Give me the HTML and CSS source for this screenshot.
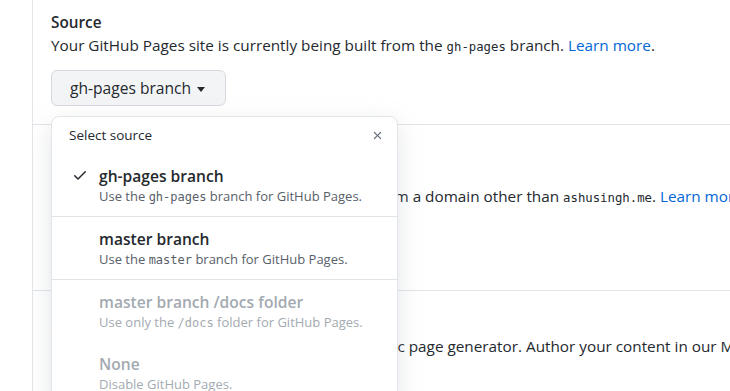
FILE: index.html
```html
<!DOCTYPE html>
<html lang="en">
<head>
  <meta charset="UTF-8" />
  <title>GitHub Pages settings</title>
  <link rel="stylesheet" href="styles.css">
</head>
<body>

  <div class="settings">

    <!-- Source -->
    <div class="section section-source">
      <h3>Source</h3>
      <p>Your GitHub Pages site is currently being built from the <code>gh-pages</code> branch. <a href="#">Learn more</a>.</p>

      <div class="select-menu">
        <button class="btn">gh-pages branch <span class="caret"></span></button>

        <div class="select-menu-modal">
          <div class="select-menu-header">
            <span>Select source</span>
            <svg class="close-icon" viewBox="0 0 16 16" width="13" height="13"><path d="M3.72 3.72a.75.75 0 011.06 0L8 6.94l3.22-3.22a.75.75 0 111.06 1.06L9.06 8l3.22 3.22a.75.75 0 11-1.06 1.06L8 9.06l-3.22 3.22a.75.75 0 01-1.06-1.06L6.94 8 3.72 4.78a.75.75 0 010-1.06z"/></svg>
          </div>

          <div class="select-menu-item selected">
            <svg class="check-icon" viewBox="0 0 16 16" width="16" height="16"><path d="M13.78 4.22a.75.75 0 010 1.06l-7.25 7.25a.75.75 0 01-1.06 0L2.22 9.28a.75.75 0 011.06-1.06L6 10.94l6.72-6.72a.75.75 0 011.06 0z"/></svg>
            <div class="item-text">
              <div class="item-title">gh-pages branch</div>
              <div class="item-desc">Use the <code>gh-pages</code> branch for GitHub Pages.</div>
            </div>
          </div>

          <div class="select-menu-item">
            <span class="check-space"></span>
            <div class="item-text">
              <div class="item-title">master branch</div>
              <div class="item-desc">Use the <code>master</code> branch for GitHub Pages.</div>
            </div>
          </div>

          <div class="select-menu-item disabled no-border">
            <span class="check-space"></span>
            <div class="item-text">
              <div class="item-title">master branch /docs folder</div>
              <div class="item-desc">Use only the <code>/docs</code> folder for GitHub Pages.</div>
            </div>
          </div>

          <div class="select-menu-item disabled">
            <span class="check-space"></span>
            <div class="item-text">
              <div class="item-title">None</div>
              <div class="item-desc">Disable GitHub Pages.</div>
            </div>
          </div>
        </div>
      </div>
    </div>

    <!-- Custom domain -->
    <div class="section section-domain">
      <h3>Custom domain</h3>
      <p>Custom domains allow you to serve your site from a domain other than <code>ashusingh.me</code>. <a href="#">Learn more</a>.</p>
      <div class="domain-form">
        <input class="form-control" type="text">
        <button class="btn">Save</button>
      </div>
    </div>

    <!-- Page generator -->
    <div class="section section-theme">
      <h3>Automatic page generator</h3>
      <p>Quickly design and publish a site via an automatic page generator. Author your content in our Markdown editor, select a theme, then publish.</p>
    </div>

  </div>

</body>
</html>
```

FILE: styles.css
```css
body {
  margin: 0;
  background: #fff;
  font-family: 'Open Sans', 'Noto Sans', sans-serif;
  color: #24292e;
  overflow: hidden;
}

.settings {
  margin-left: 32px;
  border-left: 1px solid #e1e4e8;
  height: 100vh;
  overflow: hidden;
}

.section {
  padding: 11px 0 18px 18px;
  border-bottom: 1px solid #e1e4e8;
}

.section-domain {
  padding-top: 37px;
  padding-bottom: 34px;
}

.section-theme {
  padding-top: 21px;
  border-bottom: none;
}

h3 {
  margin: 0;
  font-size: 15.3px;
  line-height: 22px;
  font-weight: 600;
}

p {
  margin: 0;
  font-size: 15.3px;
  line-height: 24px;
  white-space: nowrap;
}

code {
  font-family: 'DejaVu Sans Mono', monospace;
  font-size: 12.3px;
  line-height: 1;
}

a {
  color: #0366d6;
  text-decoration: none;
}

.btn {
  height: 36px;
  padding: 0 20px 0 18px;
  font-family: inherit;
  font-size: 15.6px;
  color: #24292e;
  background-color: #f3f4f6;
  border: 1px solid #d6d9dd;
  border-radius: 6px;
}

.caret {
  display: inline-block;
  margin-left: 2px;
  vertical-align: middle;
  border-top: 5px solid #24292e;
  border-left: 4px solid transparent;
  border-right: 4px solid transparent;
}

/* Dropdown */
.select-menu {
  position: relative;
  margin-top: 13px;
}

.select-menu-modal {
  position: absolute;
  top: 46px;
  left: 0;
  width: 345px;
  background: #fff;
  border: 1px solid #e1e4e8;
  border-radius: 8px;
  box-shadow: 0 8px 24px rgba(149, 157, 165, 0.25);
  z-index: 10;
}

.select-menu-header {
  display: flex;
  justify-content: space-between;
  align-items: center;
  padding: 8px 13px 9px 17px;
  height: 20px;
  font-size: 13.5px;
  line-height: 20px;
}

.close-icon {
  fill: #6a737d;
}

.select-menu-item {
  display: flex;
  align-items: flex-start;
  padding: 12px 16px 11px 20px;
  border-bottom: 1px solid #e1e4e8;
}

.select-menu-item.no-border {
  border-bottom: none;
}

.check-icon {
  fill: #24292e;
  margin-top: 1px;
  margin-right: 11px;
  flex-shrink: 0;
}

.check-space {
  width: 16px;
  margin-right: 11px;
  flex-shrink: 0;
}

.item-title {
  font-size: 15.6px;
  line-height: 20px;
  font-weight: 600;
}

.item-desc {
  margin-top: 2px;
  font-size: 13px;
  line-height: 17px;
  color: #586069;
}

.item-desc code {
  font-size: 12px;
}

.disabled .item-title,
.disabled .item-desc {
  color: #a3aab1;
}

/* Custom domain form */
.domain-form {
  display: flex;
  gap: 6px;
  margin-top: 12px;
}

.form-control {
  width: 220px;
  height: 34px;
  box-sizing: border-box;
  border: 1px solid #e1e4e8;
  border-radius: 6px;
}
```
